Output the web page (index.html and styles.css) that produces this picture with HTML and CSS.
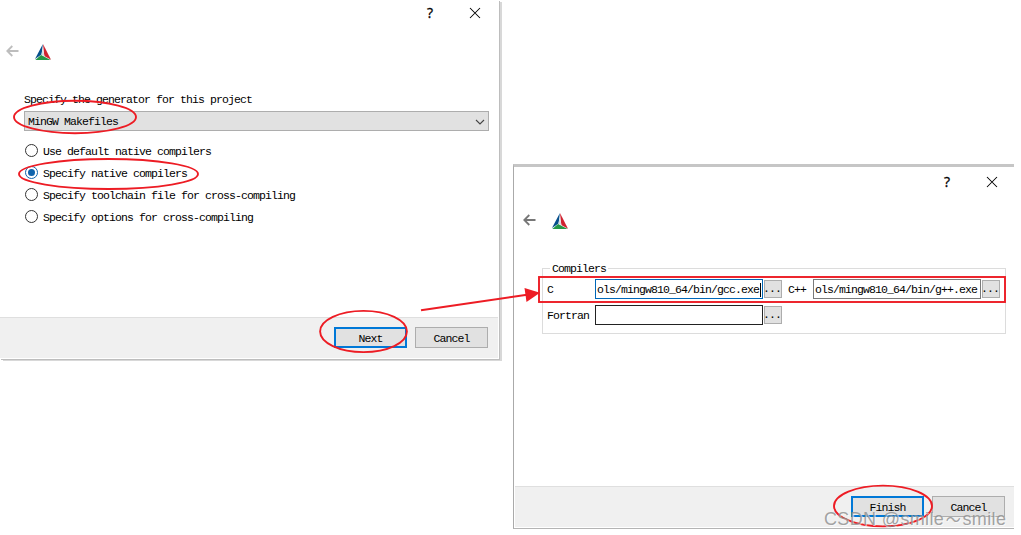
FILE: index.html
```html
<!DOCTYPE html>
<html lang="en">
<head>
<meta charset="utf-8">
<title>CMake generator setup</title>
<link rel="stylesheet" href="styles.css">
</head>
<body>
<svg class="defs" width="0" height="0" aria-hidden="true">
  <symbol id="cmake" viewBox="0 0 16 16">
    <path d="M7.9 0 L0 15 L6.6 10.4 Z" fill="#064f8c"/>
    <path d="M8 0 L16 15.8 L9.3 12 Z" fill="#d02330"/>
    <path d="M0.3 15.9 L6.1 10.9 L15.6 15.9 Z" fill="#249847"/>
    <path d="M7.8 5.2 L6.3 10.6 L9.6 12.2 Z" fill="#d6dce0"/>
  </symbol>
  <symbol id="back" viewBox="0 0 13 12">
    <path d="M12.5 6 H1.5 M6.3 1 L1.3 6 L6.3 11" fill="none" stroke="currentColor" stroke-width="1.8"/>
  </symbol>
  <symbol id="close" viewBox="0 0 12 12">
    <path d="M1 1 L11 11 M11 1 L1 11" fill="none" stroke="#000" stroke-width="1.05"/>
  </symbol>
</svg>
<main class="stage">
  <section class="dialog generator">
    <header class="titlebar"><span class="help">?</span><svg class="close"><use href="#close"/></svg></header>
    <div class="nav"><svg class="back faded"><use href="#back"/></svg><svg class="logo"><use href="#cmake"/></svg></div>
    <div class="content">
      <div class="prompt">Specify the generator for this project</div>
      <div class="select"><span>MinGW Makefiles</span><svg class="chevron" viewBox="0 0 10 6"><path d="M1 1 L5 5 L9 1" fill="none" stroke="#444" stroke-width="1.1"/></svg></div>
      <div class="radios">
        <div class="option"><i class="radio"></i><span>Use default native compilers</span></div>
        <div class="option"><i class="radio checked"></i><span>Specify native compilers</span></div>
        <div class="option"><i class="radio"></i><span>Specify toolchain file for cross-compiling</span></div>
        <div class="option"><i class="radio"></i><span>Specify options for cross-compiling</span></div>
      </div>
    </div>
    <footer class="footer"><div class="button primary">Next</div><div class="button">Cancel</div></footer>
  </section>

  <section class="dialog compilers">
    <header class="titlebar"><span class="help">?</span><svg class="close"><use href="#close"/></svg></header>
    <div class="nav"><svg class="back"><use href="#back"/></svg><svg class="logo"><use href="#cmake"/></svg></div>
    <div class="group">
      <div class="legend"><span>Compilers</span></div>
      <div class="fields">
        <div class="row"><span class="label">C</span><div class="input focus">ols/mingw810_64/bin/gcc.exe<i class="caret"></i></div><div class="browse">...</div><span class="label cxx">C++</span><div class="input">ols/mingw810_64/bin/g++.exe</div><div class="browse">...</div></div>
        <div class="row"><span class="label">Fortran</span><div class="input dark"></div><div class="browse">...</div></div>
      </div>
    </div>
    <footer class="footer"><div class="button primary">Finish</div><div class="button">Cancel</div></footer>
  </section>

  <svg class="marks" viewBox="0 0 1021 535" width="1021" height="535">
    <g fill="none" stroke="#ed1c24" stroke-width="1.9">
      <ellipse cx="75" cy="117" rx="61" ry="16.2"/>
      <ellipse cx="108.5" cy="174" rx="89.5" ry="15"/>
      <ellipse cx="363.5" cy="331.5" rx="43.4" ry="20.6"/>
      <ellipse cx="883" cy="506" rx="49" ry="20.4"/>
      <rect x="539" y="277" width="466" height="25"/>
      <path d="M421 310.2 L527 294.8"/>
    </g>
    <path d="M524.5 288 L540 292.8 L526.5 302 Z" fill="#ed1c24"/>
  </svg>
  <div class="watermark">CSDN @smile<span class="tilde">～</span>smile</div>
</main>
</body>
</html>
```
FILE: styles.css
```css
* { box-sizing: border-box; }
body {
  margin: 0;
  background: #fff;
  color: #000;
  font: 11.5px/14px "Liberation Mono", monospace;
  letter-spacing: -0.9px;
}
.defs { position: absolute; }
.stage { position: relative; width: 1021px; height: 535px; overflow: hidden; }
.dialog { position: absolute; display: flex; flex-direction: column; background: #fff; }
.generator {
  left: 0; top: 0; width: 499px; height: 359px;
  border-right: 1px solid #fff;
  border-bottom: 1px solid #fff;
  box-shadow: 1px 1px 0 #bdbdbd, 3px 2px 0 #d8d8d8;
}
.compilers {
  left: 513px; top: 164px; width: 501px; height: 365px;
  border-top: 3px solid #c6c6c6;
  border-left: 1px solid #aaa;
  border-bottom: 1px solid #b4b4b4;
}
.titlebar { display: flex; align-items: center; justify-content: flex-end; gap: 36px; height: 26px; padding-right: 17px; }
.compilers .titlebar { height: 29px; padding-right: 16px; }
.help { font: 14px/20px "Open Sans", sans-serif; letter-spacing: 0; -webkit-text-stroke: 0.3px #000; }
.close { width: 12px; height: 12px; }
.nav { display: flex; align-items: center; gap: 16px; height: 52px; padding: 0 0 0 6px; }
.compilers .nav { padding-left: 9px; height: 50px; }
.back { width: 13px; height: 12px; color: #777; margin-top: -2px; }
.faded { color: #bdbdbd; }
.logo { width: 16px; height: 16px; }
.content { padding: 14px 9px 0 24px; }
.prompt { height: 19px; padding-top: 1px; }
.select {
  display: flex; align-items: center; justify-content: space-between;
  height: 20px; padding: 0 3px; border: 1px solid #adadad; background: #e1e1e1;
}
.select span, .option span { padding-top: 1px; }
.chevron { width: 10px; height: 6px; margin-top: 2px; }
.radios { padding-top: 9px; }
.option { display: flex; align-items: center; gap: 5px; height: 22px; padding-left: 1px; }
.radio { width: 13px; height: 13px; margin-top: -1px; border: 1px solid #333; border-radius: 50%; background: #fff; }
.checked { border-color: #0f64ad; padding: 2px; background: #0f64ad content-box; }
.footer {
  display: flex; justify-content: flex-end; gap: 8px;
  height: 41px; margin-top: auto; padding: 9px 10px 0 0;
  border-top: 1px solid #dfdfdf; background: #f0f0f0;
}
.compilers .footer { margin-bottom: 1px; margin-left: 1px; padding-right: 9px; }
.button {
  display: flex; align-items: center; justify-content: center;
  width: 73px; height: 21px; padding-top: 2px; border: 1px solid #adadad; background: #e1e1e1;
}
.primary { border: 2px solid #0078d7; }
.group { margin: 15px 8px 0 28px; }
.legend { display: flex; height: 14px; align-items: center; }
.legend::before { content: ""; width: 8px; height: 1px; background: #dcdcdc; }
.legend::after { content: ""; flex: 1; height: 1px; background: #dcdcdc; }
.legend span { padding: 1px 2px 0; }
.fields {
  display: flex; flex-direction: column; gap: 6px;
  height: 66px; margin-top: -7px; padding: 11px 0 0 4px;
  border: 1px solid #dcdcdc; border-top: 0;
}
.row { display: flex; align-items: center; height: 20px; }
.label { width: 48px; padding-top: 1px; }
.cxx { width: 31px; padding-left: 6px; }
.input {
  display: flex; align-items: center;
  width: 168px; height: 20px; padding: 1px 0 0 1px; border: 1px solid #7a7a7a; background: #fff;
}
.focus { border-color: #0067b8; }
.dark { border-color: #222; }
.caret { width: 1px; height: 14px; margin-left: 1px; background: #000; }
.browse { width: 18px; height: 18px; margin-left: 1px; border: 1px solid #adadad; background: #e1e1e1; line-height: 16px; text-indent: -2px; }
.marks { position: absolute; left: 0; top: 0; }
.watermark {
  position: absolute; left: 824px; top: 508px;
  font: 18px/22px "Liberation Sans", "Noto Sans CJK SC", sans-serif; letter-spacing: 0.35px;
  white-space: nowrap; color: rgba(140, 140, 140, 0.8);
  text-shadow: 1px 1px 0 rgba(255, 255, 255, 0.6);
}
.tilde { padding: 0 1.5px; font-size: 15px; }
```
